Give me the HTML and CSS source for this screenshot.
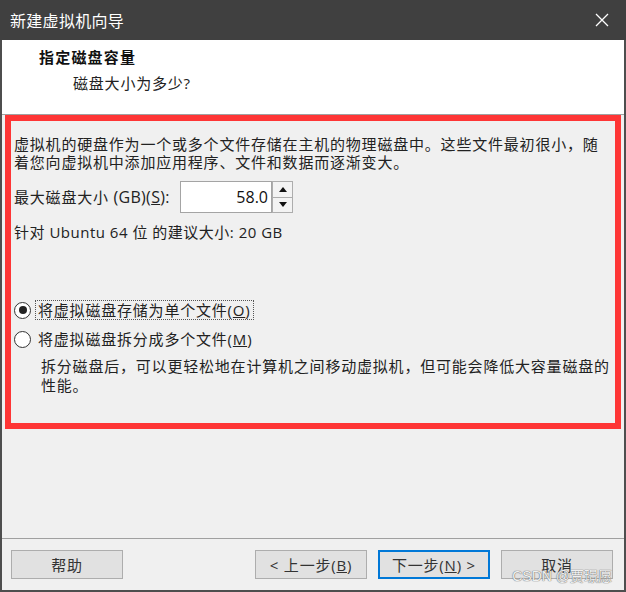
FILE: index.html
```html
<!DOCTYPE html>
<html lang="zh-CN">
<head>
<meta charset="utf-8">
<title>新建虚拟机向导</title>
<link rel="stylesheet" href="styles.css">
</head>
<body>
<div class="window">
  <div class="titlebar">
    <span class="title">新建虚拟机向导</span>
    <svg class="close" width="14" height="14" viewBox="0 0 14 14"><path d="M1 1 L13 13 M13 1 L1 13" stroke="#ffffff" stroke-width="1.3" fill="none"/></svg>
  </div>
  <div class="header">
    <div class="h-title">指定磁盘容量</div>
    <div class="h-sub">磁盘大小为多少?</div>
  </div>
  <div class="content">
    <div class="redbox">
      <p class="desc">虚拟机的硬盘作为一个或多个文件存储在主机的物理磁盘中。这些文件最初很小，随<br>着您向虚拟机中添加应用程序、文件和数据而逐渐变大。</p>
      <div class="size-row">
        <span class="size-label">最大磁盘大小 <span class="lat">(GB)(<u>S</u>):</span></span>
        <div class="spin">
          <div class="spin-input">58.0</div>
          <div class="spin-btns">
            <div class="spin-btn"><span class="tri-up"></span></div>
            <div class="spin-btn"><span class="tri-down"></span></div>
          </div>
        </div>
      </div>
      <p class="recommend">针对 Ubuntu 64 位 的建议大小: 20 GB</p>
      <div class="radio-row first">
        <span class="radio checked"></span>
        <span class="rlabel focus">将虚拟磁盘存储为单个文件(<u>O</u>)</span>
      </div>
      <div class="radio-row second">
        <span class="radio"></span>
        <span class="rlabel">将虚拟磁盘拆分成多个文件(<u>M</u>)</span>
      </div>
      <p class="note">拆分磁盘后，可以更轻松地在计算机之间移动虚拟机，但可能会降低大容量磁盘的<br>性能。</p>
    </div>
  </div>
  <div class="footer">
    <button class="btn">帮助</button>
    <div class="nav">
      <button class="btn">&lt; 上一步(<u>B</u>)</button>
      <button class="btn primary">下一步(<u>N</u>) &gt;</button>
      <button class="btn">取消</button>
    </div>
  </div>
  <div class="watermark">CSDN @贾璟愿</div>
</div>
</body>
</html>
```

FILE: styles.css
```css
html, body {
  margin: 0;
  padding: 0;
}
body {
  width: 626px;
  height: 592px;
  overflow: hidden;
  font-family: "Open Sans", "Noto Sans CJK SC", sans-serif;
  color: #222;
}
.window {
  position: relative;
  width: 626px;
  height: 592px;
  box-sizing: border-box;
  background: #f0f0f0;
  border-left: 2px solid #4e4e4e;
  border-right: 2px solid #4e4e4e;
  border-bottom: 2px solid #4e4e4e;
  display: flex;
  flex-direction: column;
}
.titlebar {
  height: 40px;
  margin: 0 -2px;
  background: #404040;
  display: flex;
  align-items: center;
  justify-content: space-between;
  padding: 0 17px 0 10px;
  flex-shrink: 0;
}
.title {
  color: #ffffff;
  font-family: "Noto Sans CJK SC", sans-serif;
  font-size: 16px;
  letter-spacing: 0.3px;
}
.close {
  display: block;
}
.header {
  height: 75px;
  background: #ffffff;
  border-bottom: 1px solid #a0a0a0;
  flex-shrink: 0;
  padding-top: 7px;
  box-sizing: border-box;
}
.h-title {
  font-family: "Noto Sans CJK SC", sans-serif;
  font-weight: bold;
  font-size: 15px;
  line-height: 20px;
  letter-spacing: 1.2px;
  padding-left: 37px;
  color: #111;
}
.h-sub {
  font-size: 15px;
  line-height: 20px;
  letter-spacing: 0.8px;
  padding-left: 71px;
  margin-top: 6px;
  color: #222;
}
.content {
  flex: 1;
  padding: 0 3px;
}
.redbox {
  height: 314px;
  box-sizing: border-box;
  border: 6px solid #fe3535;
  padding: 14px 0 0 3px;
  font-size: 15px;
  letter-spacing: 0.8px;
}
.desc {
  margin: 0;
  line-height: 18px;
}
.size-row {
  margin-top: 10px;
  display: flex;
  align-items: center;
  height: 32px;
}
.size-label {
  width: 166px;
  flex-shrink: 0;
}
.lat {
  font-size: 16px;
  letter-spacing: 0.3px;
}
.spin {
  display: flex;
  height: 32px;
}
.spin-input {
  width: 92px;
  height: 32px;
  box-sizing: border-box;
  background: #ffffff;
  border: 1px solid #a4a4a4;
  text-align: right;
  padding-right: 3px;
  font-size: 16px;
  line-height: 30px;
  letter-spacing: 0;
  color: #111;
}
.spin-btns {
  width: 21px;
  display: flex;
  flex-direction: column;
}
.spin-btn {
  flex: 1;
  border: 1px solid #adadad;
  background: #f3f3f3;
  display: flex;
  align-items: center;
  justify-content: center;
}
.spin-btn + .spin-btn {
  border-top: none;
}
.tri-up {
  width: 0;
  height: 0;
  border-left: 4px solid transparent;
  border-right: 4px solid transparent;
  border-bottom: 5px solid #111;
}
.tri-down {
  width: 0;
  height: 0;
  border-left: 4px solid transparent;
  border-right: 4px solid transparent;
  border-top: 5px solid #111;
}
.recommend {
  margin: 10px 0 0;
  line-height: 18px;
  letter-spacing: 0.5px;
}
.radio-row {
  display: flex;
  align-items: center;
  height: 20px;
}
.radio-row.first {
  margin-top: 59px;
}
.radio-row.second {
  margin-top: 9px;
}
.radio {
  width: 17px;
  height: 17px;
  box-sizing: border-box;
  border: 1px solid #333;
  border-radius: 50%;
  background: #ffffff;
  display: flex;
  align-items: center;
  justify-content: center;
  flex-shrink: 0;
}
.radio.checked::after {
  content: "";
  width: 8px;
  height: 8px;
  border-radius: 50%;
  background: #222;
}
.rlabel {
  margin-left: 4px;
  padding: 0 2px 0 2px;
  line-height: 18px;
  border: 1px solid transparent;
}
.rlabel.focus {
  border: 1px dotted #555;
}
.note {
  margin: 8px 0 0 27px;
  line-height: 19px;
}
.footer {
  height: 52px;
  box-sizing: border-box;
  border-top: 1px solid #a0a0a0;
  padding: 11px 11px 0 9px;
  display: flex;
  justify-content: space-between;
  align-items: flex-start;
  flex-shrink: 0;
}
.nav {
  display: flex;
  gap: 11px;
}
.btn {
  width: 112px;
  height: 29px;
  box-sizing: border-box;
  background: #e1e1e1;
  border: 1px solid #adadad;
  font-family: "Open Sans", "Noto Sans CJK SC", sans-serif;
  font-size: 15px;
  letter-spacing: 0.8px;
  color: #333;
  padding: 0;
  margin: 0;
}
.btn.primary {
  border: 2px solid #0078d7;
}
.watermark {
  position: absolute;
  right: 12px;
  bottom: 5px;
  font-family: "Liberation Sans", "Noto Sans CJK SC", sans-serif;
  font-size: 14px;
  color: rgba(255, 255, 255, 0.92);
  text-shadow: 0 0 1px #666, 0 0 1px #666;
}
```
